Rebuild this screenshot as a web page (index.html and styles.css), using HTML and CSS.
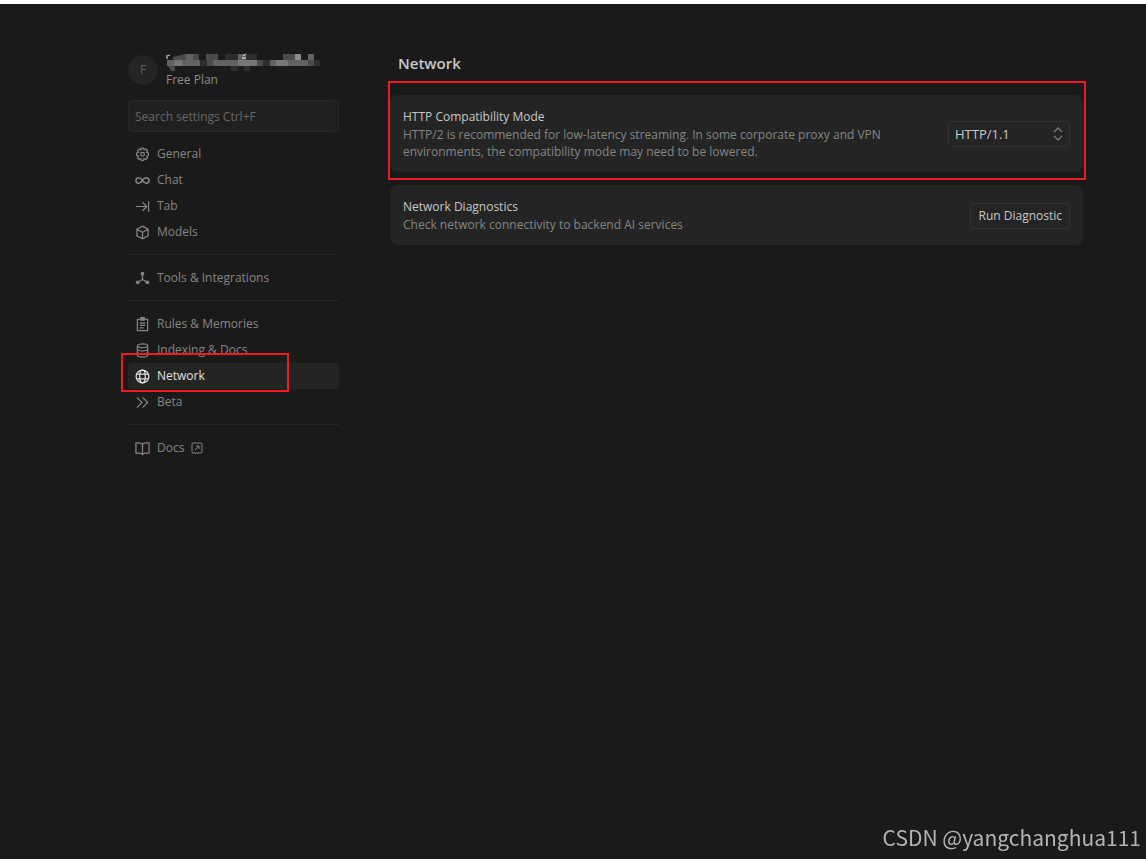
FILE: index.html
```html
<!DOCTYPE html>
<html lang="en">
<head>
    <meta charset="UTF-8">
    <meta name="viewport" content="width=device-width, initial-scale=1.0">
    <title>Settings - Network</title>
    <link rel="stylesheet" href="styles.css">
</head>
<body>
    <div class="settings">
        <aside class="sidebar">
            <div class="account">
                <div class="avatar">F</div>
                <div class="account-info">
                    <svg class="hidden-name" width="155" height="19" viewBox="0 0 155 19" aria-hidden="true">
                        <path fill="#2d2d2d" d="M59 2h13v6H59zM80 2h11v6H80zM34 8h7v6h-7zM97 8h7v6h-7zM65 14h7v5h-7zM78 14h6v5h-6zM148 8h6v6h-6z"/>
                        <path fill="#4b4b4b" d="M7 5l12-3h14v6H7zM40 2h12v6H40zM117 2h12v6h-12zM41 8h6v6h-6zM91 8h6v6h-6zM142 8h6v6h-6zM2 14h7v5H5z"/>
                        <path fill="#626262" d="M1 8h33v6H1zM47 8h25v6H47zM72 2h8v6h-8zM104 8h38v6h-38zM142 2h6v6h-6zM20 2h7v6h-7z"/>
                        <path fill="#777" d="M72 8h19v6H72zM110 8h12v6h-12zM9 8h7v6H9z"/>
                        <path fill="#8c8c8c" d="M129 2h6v6h-6z"/>
                        <path stroke="#bbb" d="M1 7V4l3-1M77 4l3-2M76 6h4"/>
                    </svg>
                    <span>Free Plan</span>
                </div>
            </div>

            <input class="search" type="text" placeholder="Search settings Ctrl+F" aria-label="Search settings">

            <nav class="nav">
                <a class="nav-item" href="#">
                    <svg viewBox="0 0 16 16"><path d="M6.8 1.2h2.4l.5 1.9 1.9-1 1.7 1.7-1 1.9 1.9.6v2.8l-1.9.6 1 1.9-1.700 1.700-1.900-1-.5 1.900H6.800l-.5-1.900-1.900 1-1.700-1.700 1-1.900-1.900-.6V6.300l1.900-.6-1-1.900 1.700-1.700 1.900 1z"/><circle cx="8" cy="7.700" r="2"/></svg>
                    General
                </a>
                <a class="nav-item" href="#">
                    <svg viewBox="0 0 16 16"><path stroke-width="1.6" d="M8 8C6.700 6 5.700 5 4 5a3 3 0 0 0 0 6c1.700 0 2.700-1 4-3s2.300-3 4-3a3 3 0 0 1 0 6c-1.700 0-2.700-1-4-3z"/></svg>
                    Chat
                </a>
                <a class="nav-item" href="#">
                    <svg viewBox="0 0 16 16"><path d="M1 8h11M8 3.500L12.500 8 8 12.500M14.500 2.500v11"/></svg>
                    Tab
                </a>
                <a class="nav-item" href="#">
                    <svg viewBox="0 0 16 16"><path d="M8 1.200l6 3.300v7l-6 3.300-6-3.300v-7zM2 4.500l6 3.300 6-3.300M8 7.800v7"/></svg>
                    Models
                </a>
                <hr>
                <a class="nav-item" href="#">
                    <svg viewBox="0 0 16 16"><path d="M8 3v6M8 9l-5 3M8 9l5 3"/><g class="solid"><circle cx="8" cy="2.800" r="2"/><circle cx="2.800" cy="12" r="2"/><circle cx="13.200" cy="12" r="2"/></g></svg>
                    Tools &amp; Integrations
                </a>
                <hr>
                <a class="nav-item" href="#">
                    <svg viewBox="0 0 16 16"><path d="M5.500 2.500h-3v12h11v-12h-3M5 6.500h6M5 9h6M5 11.500h4"/><path class="solid" d="M5.500 0h5v4h-5z"/></svg>
                    Rules &amp; Memories
                </a>
                <a class="nav-item" href="#">
                    <svg viewBox="0 0 16 16"><ellipse cx="8" cy="3" rx="5.500" ry="2"/><path d="M2.500 3v10c0 1.100 2.500 2 5.500 2s5.500-.9 5.500-2V3M2.500 6.300c0 1.100 2.500 2 5.500 2s5.500-.9 5.500-2M2.500 9.700c0 1.100 2.500 2 5.500 2s5.500-.9 5.500-2"/></svg>
                    Indexing &amp; Docs
                </a>
                <a class="nav-item active" href="#">
                    <svg viewBox="0 0 16 16"><circle cx="8" cy="8" r="6.800"/><ellipse cx="8" cy="8" rx="3" ry="6.800"/><path d="M1.800 5.500h12.400M1.800 10.500h12.400"/></svg>
                    Network
                    <span class="mark mark-nav"></span>
                </a>
                <a class="nav-item" href="#">
                    <svg viewBox="0 0 16 16"><path d="M2 2.500L7.500 8 2 13.500M8 2.500L13.500 8 8 13.500"/></svg>
                    Beta
                </a>
                <hr>
                <a class="nav-item" href="#">
                    <svg viewBox="0 0 16 16"><path d="M8 3.500C7 2.500 5.500 2 4 2H1v11h3.500c1.500 0 2.700.5 3.500 1.500.8-1 2-1.500 3.500-1.500H15V2h-3c-1.500 0-3 .5-4 1.500zM8 3.500v11"/></svg>
                    Docs
                    <svg class="external" viewBox="0 0 12 12"><rect x="1" y="1" width="10" height="10" rx="1"/><path d="M4 8l4-4M5 4h3v3"/></svg>
                </a>
            </nav>
        </aside>

        <main class="content">
            <h1>Network</h1>

            <section class="card">
                <div class="card-text">
                    <label class="card-title" for="http-mode">HTTP Compatibility Mode</label>
                    <p>HTTP/2 is recommended for low-latency streaming. In some corporate proxy and VPN environments, the compatibility mode may need to be lowered.</p>
                </div>
                <div class="select-box">
                    <select id="http-mode">
                        <option>HTTP/2</option>
                        <option selected>HTTP/1.1</option>
                        <option>HTTP/1.0</option>
                    </select>
                    <svg viewBox="0 0 10 14"><path d="M1 5l4-4 4 4M1 9l4 4 4-4"/></svg>
                </div>
                <span class="mark mark-card"></span>
            </section>

            <section class="card">
                <div class="card-text">
                    <h2 class="card-title">Network Diagnostics</h2>
                    <p>Check network connectivity to backend AI services</p>
                </div>
                <button type="button">Run Diagnostic</button>
            </section>
        </main>
    </div>

    <div class="watermark">CSDN @yangchanghua111</div>
</body>
</html>
```

FILE: styles.css
```css
* {
    box-sizing: border-box;
}
body {
    margin: 0;
    min-height: 100vh;
    border-top: 4px solid #fff;
    background-color: #1a1a1a;
    color: #c8c8c8;
    font-family: "Open Sans", "Noto Sans", sans-serif;
    font-size: 12px;
    line-height: 18px;
}
svg {
    fill: none;
    stroke: currentColor;
    stroke-width: 1.3;
    flex-shrink: 0;
}
.solid {
    fill: currentColor;
    stroke: none;
}
.settings {
    display: flex;
    gap: 51px;
    padding: 49px 63px 0 128px;
}

/* Sidebar */
.sidebar {
    width: 211px;
    flex-shrink: 0;
}
.account {
    display: flex;
    align-items: center;
    gap: 8px;
    height: 34px;
    color: #8c8c8c;
}
.avatar {
    width: 30px;
    height: 30px;
    border-radius: 50%;
    background-color: #242424;
    color: #5c5c5c;
    line-height: 30px;
    text-align: center;
}
.account-info {
    display: flex;
    flex-direction: column;
}
.hidden-name {
    stroke: none;
}
.search {
    display: block;
    width: 100%;
    height: 32px;
    margin-top: 13px;
    padding: 0 6px;
    border: 1px solid #262626;
    border-radius: 4px;
    background-color: #202020;
    color: #c8c8c8;
    font: inherit;
}
.search::placeholder {
    color: #666;
}
.nav {
    margin-top: 9px;
}
.nav-item {
    display: flex;
    align-items: center;
    gap: 7px;
    position: relative;
    height: 26px;
    padding: 0 7px;
    border-radius: 4px;
    color: #858585;
    text-decoration: none;
}
.nav-item svg {
    width: 15px;
    height: 15px;
}
.nav-item .external {
    width: 12px;
    height: 12px;
    stroke-width: 1;
}
.nav-item.active {
    background-color: #242424;
    color: #e0e0e0;
}
.nav hr {
    height: 1px;
    margin: 9px 0 10px;
    border: none;
    background-color: #262626;
}

/* Content */
.content {
    flex: 1;
    min-width: 0;
}
h1 {
    margin: 0 8px 21px;
    color: #c8c8c8;
    font-size: 15px;
    font-weight: 600;
    line-height: 21px;
}
.card {
    display: flex;
    align-items: center;
    justify-content: space-between;
    gap: 24px;
    position: relative;
    margin-bottom: 13px;
    padding: 13px 13px 12px;
    border-radius: 8px;
    background-color: #242424;
}
.card-text {
    max-width: 500px;
}
.card-title {
    display: block;
    margin: 0;
    font-size: 12px;
    font-weight: 400;
}
.card p {
    margin: 0;
    color: #858585;
    line-height: 17px;
}
.select-box {
    display: flex;
    align-items: center;
    position: relative;
}
.select-box select {
    width: 122px;
    height: 26px;
    padding: 0 6px;
    border: 1px solid #333;
    border-radius: 5px;
    background-color: #242424;
    color: #c8c8c8;
    font: inherit;
    font-size: 13px;
    appearance: none;
}
.select-box svg {
    position: absolute;
    right: 7px;
    width: 10px;
    height: 14px;
    color: #777;
    pointer-events: none;
}
button {
    height: 26px;
    padding: 0 7px;
    border: 1px solid #333;
    border-radius: 4px;
    background-color: #242424;
    color: #c8c8c8;
    font: inherit;
}

/* Red outlines */
.mark {
    position: absolute;
    border: 2px solid #ed1c24;
    pointer-events: none;
}
.mark-nav {
    inset: -10px 50px -3px -7px;
}
.mark-card {
    inset: -14px -3px -8px -2px;
}

.watermark {
    position: fixed;
    right: 5px;
    bottom: 6px;
    color: #b4b4b4;
    font-family: "Noto Sans CJK SC", sans-serif;
    font-size: 21px;
    line-height: 32px;
}
```
